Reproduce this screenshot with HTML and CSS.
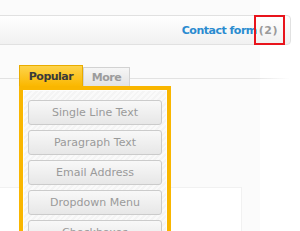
FILE: index.html
```html
<!DOCTYPE html>
<html>
<head>
<meta charset="utf-8">
<link rel="stylesheet" href="styles.css">
</head>
<body>
<div class="topbar">
  <span class="form-title">Contact form</span>
  <span class="count">(2)</span>
</div>
<div class="highlight"></div>
<div class="builder">
  <div class="tabs">
    <div class="tab tab-active">Popular</div>
    <div class="tab">More</div>
  </div>
  <div class="panel">
    <div class="panel-inner">
      <div class="field-btn">Single Line Text</div>
      <div class="field-btn">Paragraph Text</div>
      <div class="field-btn">Email Address</div>
      <div class="field-btn">Dropdown Menu</div>
      <div class="field-btn">Checkboxes</div>
      <div class="field-btn">Multiple Choice</div>
    </div>
  </div>
</div>
</body>
</html>
```
FILE: styles.css
```css
html, body {
  margin: 0;
  padding: 0;
  height: 231px;
  overflow: hidden;
}
body {
  font-family: "DejaVu Sans", sans-serif;
  font-size: 11px;
  background: linear-gradient(to right, #fbfbfb 0, #fbfbfb 260px, #ffffff 260px);
}
.topbar {
  box-sizing: border-box;
  margin: 15px 0 0 -5px;
  width: 296px;
  height: 30px;
  border: 1px solid #e1e1e1;
  border-radius: 4px;
  background: linear-gradient(#ffffff, #f1f1f1);
  display: flex;
  justify-content: flex-end;
  align-items: center;
  padding-right: 12px;
  font-weight: bold;
  gap: 2px;
}
.form-title {
  color: #2a8bd0;
  letter-spacing: -0.5px;
}
.count {
  color: #9a9a9a;
  letter-spacing: 0.5px;
}
.highlight {
  position: absolute;
  left: 254px;
  top: 15px;
  width: 31px;
  height: 30px;
  box-sizing: border-box;
  border: 2px solid #e8141c;
}
.builder {
  margin-top: 20px;
  height: 166px;
  background-image:
    linear-gradient(to right, #e2e2e2 0, #e2e2e2 255px, rgba(226,226,226,0) 290px),
    linear-gradient(#ffffff, #ffffff),
    linear-gradient(#f1f1f1, #f1f1f1);
  background-repeat: no-repeat;
  background-size: 290px 1px, 241px 200px, 242px 200px;
  background-position: 0 13px, 0 123px, 0 122px;
}
.tabs {
  display: flex;
  align-items: flex-end;
  margin-left: 19px;
  height: 21px;
}
.tab {
  box-sizing: border-box;
  height: 19px;
  width: 47px;
  border: 1px solid #d2d2d2;
  border-bottom: none;
  background: linear-gradient(#f6f6f6, #e3e3e3);
  color: #9c9c9c;
  font-weight: bold;
  letter-spacing: -0.5px;
  text-align: center;
  line-height: 20px;
}
.tab-active {
  height: 21px;
  width: 64px;
  border-color: #e9ac00;
  background: linear-gradient(#fdd34c, #fbb800);
  color: #3a3a3a;
  line-height: 22px;
}
.panel {
  box-sizing: border-box;
  margin-left: 19px;
  width: 152px;
  border: 4px solid #f9b600;
  border-bottom: none;
}
.panel-inner {
  border: 1px solid #fdfdfd;
  padding: 9px 4px 0;
  background: repeating-linear-gradient(135deg, #f4f4f4 0, #f4f4f4 2px, #fafafa 2px, #fafafa 4px);
}
.field-btn {
  box-sizing: border-box;
  height: 25px;
  margin-bottom: 5px;
  border: 1px solid #cbcbcb;
  border-radius: 3px;
  background: linear-gradient(#f8f8f8, #e7e7e7);
  color: #9a9a9a;
  text-align: center;
  line-height: 23px;
}
```
